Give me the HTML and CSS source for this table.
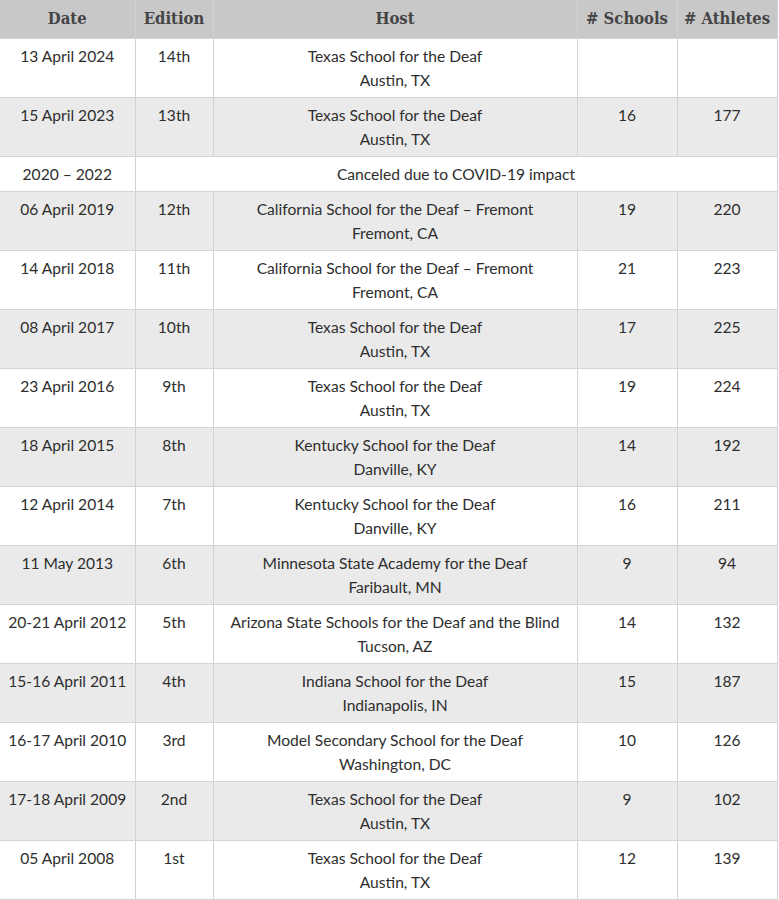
FILE: index.html
```html
<!DOCTYPE html>
<html lang="en">
<head>
<meta charset="utf-8">
<title>Deaf Academic Bowl editions</title>
<link rel="stylesheet" href="styles.css">
</head>
<body>
<table class="results">
  <colgroup>
    <col class="c-date"><col class="c-ed"><col class="c-host"><col class="c-num"><col class="c-num">
  </colgroup>
  <thead>
    <tr><th>Date</th><th>Edition</th><th>Host</th><th># Schools</th><th># Athletes</th></tr>
  </thead>
  <tbody>
    <tr><td>13 April 2024</td><td>14th</td><td>Texas School for the Deaf<br>Austin, TX</td><td></td><td></td></tr>
    <tr><td>15 April 2023</td><td>13th</td><td>Texas School for the Deaf<br>Austin, TX</td><td>16</td><td>177</td></tr>
    <tr><td>2020 – 2022</td><td colspan="4">Canceled due to COVID-19 impact</td></tr>
    <tr><td>06 April 2019</td><td>12th</td><td>California School for the Deaf – Fremont<br>Fremont, CA</td><td>19</td><td>220</td></tr>
    <tr><td>14 April 2018</td><td>11th</td><td>California School for the Deaf – Fremont<br>Fremont, CA</td><td>21</td><td>223</td></tr>
    <tr><td>08 April 2017</td><td>10th</td><td>Texas School for the Deaf<br>Austin, TX</td><td>17</td><td>225</td></tr>
    <tr><td>23 April 2016</td><td>9th</td><td>Texas School for the Deaf<br>Austin, TX</td><td>19</td><td>224</td></tr>
    <tr><td>18 April 2015</td><td>8th</td><td>Kentucky School for the Deaf<br>Danville, KY</td><td>14</td><td>192</td></tr>
    <tr><td>12 April 2014</td><td>7th</td><td>Kentucky School for the Deaf<br>Danville, KY</td><td>16</td><td>211</td></tr>
    <tr><td>11 May 2013</td><td>6th</td><td>Minnesota State Academy for the Deaf<br>Faribault, MN</td><td>9</td><td>94</td></tr>
    <tr><td>20-21 April 2012</td><td>5th</td><td>Arizona State Schools for the Deaf and the Blind<br>Tucson, AZ</td><td>14</td><td>132</td></tr>
    <tr><td>15-16 April 2011</td><td>4th</td><td>Indiana School for the Deaf<br>Indianapolis, IN</td><td>15</td><td>187</td></tr>
    <tr><td>16-17 April 2010</td><td>3rd</td><td>Model Secondary School for the Deaf<br>Washington, DC</td><td>10</td><td>126</td></tr>
    <tr><td>17-18 April 2009</td><td>2nd</td><td>Texas School for the Deaf<br>Austin, TX</td><td>9</td><td>102</td></tr>
    <tr><td>05 April 2008</td><td>1st</td><td>Texas School for the Deaf<br>Austin, TX</td><td>12</td><td>139</td></tr>
  </tbody>
</table>
</body>
</html>
```

FILE: styles.css
```css
html, body {
  margin: 0;
  padding: 0;
  background: #ffffff;
}

.results {
  border-collapse: collapse;
  table-layout: fixed;
  width: 777px;
  font-family: Lato, "Liberation Sans", sans-serif;
  font-size: 15.6px;
  line-height: 24px;
  color: #2e2e2e;
}

.c-date { width: 135px; }
.c-ed { width: 78px; }
.c-host { width: 364px; }
.c-num { width: 100px; }

.results th {
  background: #c8c8c8;
  font-family: "DejaVu Serif", serif;
  font-stretch: condensed;
  font-weight: bold;
  font-size: 16.5px;
  color: #444444;
  height: 38px;
  padding: 0 4px;
  border: 1px solid #d3d3d3;
  border-top: none;
  text-align: center;
  vertical-align: middle;
}

.results td {
  padding: 5px 4px;
  border: 1px solid #d3d3d3;
  text-align: center;
  vertical-align: top;
}

.results th:first-child,
.results td:first-child {
  border-left: none;
}

.results tbody tr:nth-child(even) td {
  background: #eaeaea;
}
```
